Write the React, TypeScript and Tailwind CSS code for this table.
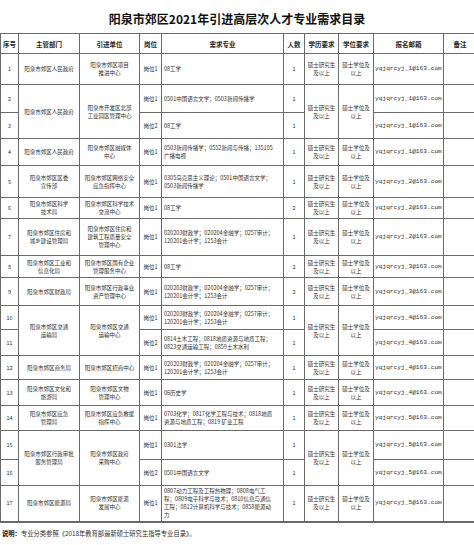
import React from 'react';

type Row = {
  no: number;
  h: string;
  dept?: string[];
  unit?: string[];
  span?: number;
  merged?: boolean;
  post: string;
  major: string[];
  count: number;
  email: string;
};

const FIN = ['020203财政学；020204金融学；0257审计；', '120201会计学；1253会计'];

const rows: Row[] = [
  { no: 1, h: 'h-[31px]', dept: ['阳泉市郊区人民政府'], unit: ['阳泉市郊区项目', '推进中心'], post: '岗位1', major: ['08工学'], count: 1, email: 'yqjqrcyj_1@163.com' },
  { no: 2, h: 'h-[28px]', dept: ['阳泉市郊区人民政府'], unit: ['阳泉市开发区北部', '工业园区管理中心'], span: 2, post: '岗位1', major: ['0501中国语言文学；0503新闻传播学'], count: 1, email: 'yqjqrcyj_1@163.com' },
  { no: 3, h: 'h-[26px]', merged: true, post: '岗位2', major: ['08工学'], count: 1, email: 'yqjqrcyj_1@163.com' },
  { no: 4, h: 'h-[27px]', dept: ['阳泉市郊区人民政府'], unit: ['阳泉市郊区融媒体', '中心'], post: '岗位1', major: ['0503新闻传播学；0552新闻与传播；135105', '广播电视'], count: 1, email: 'yqjqrcyj_1@163.com' },
  { no: 5, h: 'h-[32px]', dept: ['阳泉市郊区区委', '宣传部'], unit: ['阳泉市郊区网络安全', '应急指挥中心'], post: '岗位1', major: ['0305马克思主义理论；0501中国语言文学；', '0503新闻传播学'], count: 1, email: 'yqjqrcyj_2@163.com' },
  { no: 6, h: 'h-[21px]', dept: ['阳泉市郊区科学', '技术局'], unit: ['阳泉市郊区科学技术', '交流中心'], post: '岗位1', major: ['08工学'], count: 2, email: 'yqjqrcyj_2@163.com' },
  { no: 7, h: 'h-[37px]', dept: ['阳泉市郊区住房和', '城乡建设管理局'], unit: ['阳泉市郊区住房和', '建筑工程质量安全', '管理中心'], post: '岗位1', major: FIN, count: 1, email: 'yqjqrcyj_2@163.com' },
  { no: 8, h: 'h-[22px]', dept: ['阳泉市郊区工业和', '信息化局'], unit: ['阳泉市郊区国有企业', '管理服务中心'], post: '岗位1', major: ['08工学'], count: 2, email: 'yqjqrcyj_3@163.com' },
  { no: 9, h: 'h-[28px]', dept: ['阳泉市郊区财政局'], unit: ['阳泉市郊区行政事业', '资产管理中心'], post: '岗位1', major: FIN, count: 2, email: 'yqjqrcyj_3@163.com' },
  { no: 10, h: 'h-[24px]', dept: ['阳泉市郊区交通', '运输局'], unit: ['阳泉市郊区交通', '运输中心'], span: 2, post: '岗位1', major: FIN, count: 1, email: 'yqjqrcyj_4@163.com' },
  { no: 11, h: 'h-[26px]', merged: true, post: '岗位2', major: ['0814土木工程；0818地质资源与地质工程；', '0823交通运输工程；0859土木水利'], count: 1, email: 'yqjqrcyj_4@163.com' },
  { no: 12, h: 'h-[24px]', dept: ['阳泉市郊区商务局'], unit: ['阳泉市郊区招商中心'], post: '岗位1', major: FIN, count: 1, email: 'yqjqrcyj_4@163.com' },
  { no: 13, h: 'h-[26px]', dept: ['阳泉市郊区文化和', '旅游局'], unit: ['阳泉市郊区文物', '管理中心'], post: '岗位1', major: ['06历史学'], count: 1, email: 'yqjqrcyj_4@163.com' },
  { no: 14, h: 'h-[25px]', dept: ['阳泉市郊区应急', '管理局'], unit: ['阳泉市郊区应急救援', '指挥中心'], post: '岗位1', major: ['0703化学；0817化学工程与技术；0818地质', '资源与地质工程；0819 矿业工程'], count: 1, email: 'yqjqrcyj_5@163.com' },
  { no: 15, h: 'h-[29px]', dept: ['阳泉市郊区行政审批', '服务管理局'], unit: ['阳泉市郊区政府', '采购中心'], span: 2, post: '岗位1', major: ['0301法学'], count: 1, email: 'yqjqrcyj_5@163.com' },
  { no: 16, h: 'h-[26px]', merged: true, post: '岗位2', major: ['0501中国语言文学'], count: 1, email: 'yqjqrcyj_5@163.com' },
  { no: 17, h: 'h-[36px]', dept: ['阳泉市郊区能源局'], unit: ['阳泉市郊区能源', '发展中心'], post: '岗位1', major: ['0807动力工程及工程热物理；0808电气工', '程；0809电子科学与技术；0810信息与通信', '工程；0812计算机科学与技术；0858能源动', '力'], count: 1, email: 'yqjqrcyj_5@163.com' },
];

const cell = 'border border-[#6a6a6a] p-0 align-middle';

function Lines({ lines }: { lines: string[] }) {
  return (
    <>
      {lines.map((l, i) => (
        <div key={i} className="whitespace-nowrap">{l}</div>
      ))}
    </>
  );
}

export default function App() {
  const heads = ['序号', '主管部门', '引进单位', '岗位', '需求专业', '人数', '学历要求', '学位要求', '报名邮箱', '备注'];

  return (
    <div className="w-[474px] h-[545px] overflow-hidden bg-white font-['Noto_Sans_CJK_SC',sans-serif] text-[#2e2e2e]">
      <h1 className="h-[33px] pt-[12px] text-center text-[12px] leading-[14px] font-bold text-[#111]">
        阳泉市郊区2021年引进高层次人才专业需求目录
      </h1>

      <table className="w-[476px] table-fixed border-collapse text-[5.5px] leading-[8px]">
        <colgroup>
          <col className="w-[18px]" />
          <col className="w-[61px]" />
          <col className="w-[60px]" />
          <col className="w-[22px]" />
          <col className="w-[122px]" />
          <col className="w-[21px]" />
          <col className="w-[34px]" />
          <col className="w-[35px]" />
          <col className="w-[70px]" />
          <col className="w-[33px]" />
        </colgroup>
        <thead>
          <tr className="h-[20px]">
            {heads.map((h) => (
              <th key={h} className={`${cell} text-center text-[6.5px] font-bold text-[#1e1e1e]`}>{h}</th>
            ))}
          </tr>
        </thead>
        <tbody>
          {rows.map((r, i) => (
            <tr key={r.no} className={`${r.h} ${i === rows.length - 1 ? 'border-b-2 border-[#6a6a6a]' : ''}`}>
              <td className={`${cell} text-center`}>{r.no}</td>
              {!r.merged && (
                <>
                  <td rowSpan={r.span} className={`${cell} text-center`}><Lines lines={r.dept!} /></td>
                  <td rowSpan={r.span} className={`${cell} text-center`}><Lines lines={r.unit!} /></td>
                </>
              )}
              <td className={`${cell} text-center`}>{r.post}</td>
              <td className={`${cell} pl-[2px]`}><Lines lines={r.major} /></td>
              <td className={`${cell} text-center`}>{r.count}</td>
              {!r.merged && (
                <>
                  <td rowSpan={r.span} className={`${cell} text-center`}><Lines lines={['硕士研究生', '及以上']} /></td>
                  <td rowSpan={r.span} className={`${cell} text-center`}><Lines lines={['硕士学位及', '以上']} /></td>
                </>
              )}
              <td className={`${cell} pl-[1px] font-['Liberation_Mono',monospace] text-[6.2px] whitespace-nowrap`}>{r.email}</td>
              <td className={cell}></td>
            </tr>
          ))}
        </tbody>
      </table>

      <p className="pt-[7px] pl-[2px] text-[6.3px] leading-[8px] whitespace-nowrap">
        <span className="font-bold text-[#111]">说明：</span>专业分类参照《2018年教育部最新硕士研究生指导专业目录》。
      </p>
    </div>
  );
}
